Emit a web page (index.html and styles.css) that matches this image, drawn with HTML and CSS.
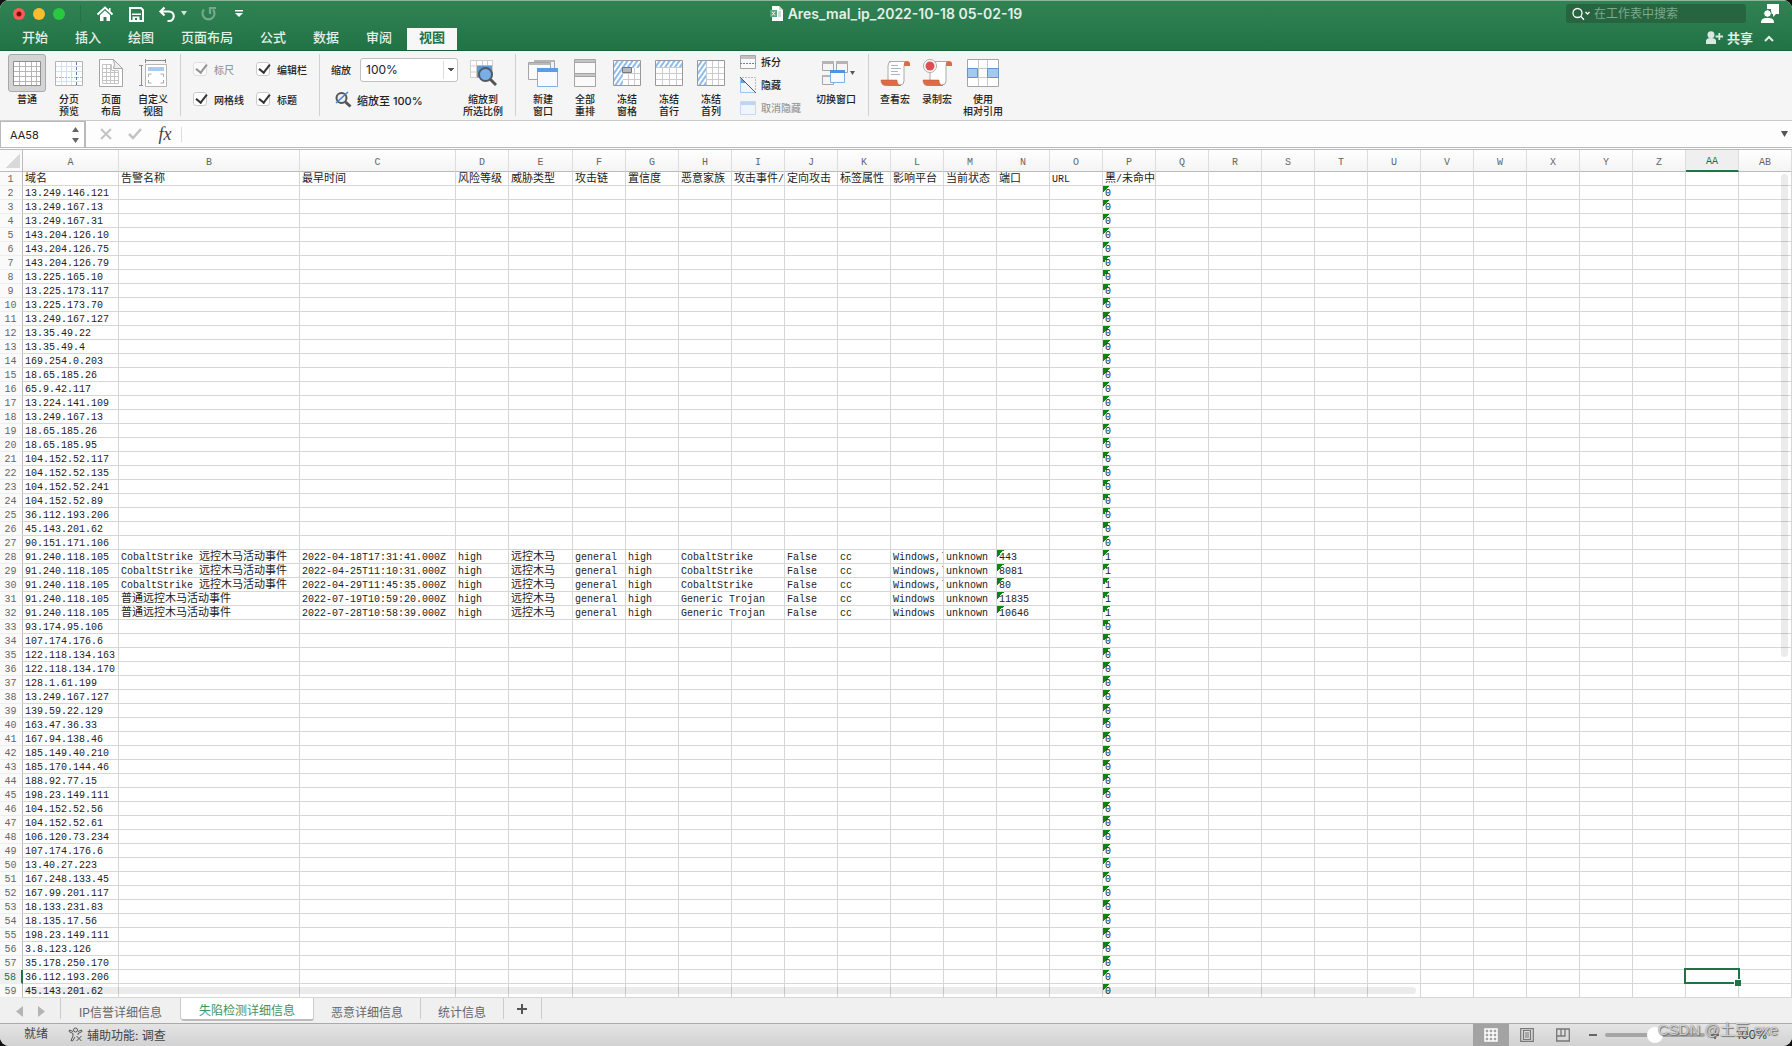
FILE: index.html
```html
<!DOCTYPE html>
<html lang="zh-CN">
<head>
    <meta charset="UTF-8">
    <meta name="viewport" content="width=device-width, initial-scale=1.0">
    <title>Ares_mal_ip_2022-10-18 05-02-19</title>
    <link rel="stylesheet" href="styles.css">
</head>
<body>
<div class="window">
    <!-- Title bar -->
    <header>
        <div class="titlebar">
            <div class="title-left">
                <button class="light red" aria-label="关闭"></button>
                <button class="light yellow" aria-label="最小化"></button>
                <button class="light green" aria-label="缩放"></button>
                <div class="quick">
                    <button aria-label="主页"><svg width="18" height="18" viewBox="0 0 18 18"><path d="M1.5 9.5 9 2.5l7.500 7" fill="none" stroke="#fff" stroke-width="2"/><path d="M4 10v6h3.500v-4h3v4H14v-6L9 5.500z" fill="#fff"/><path d="M13 3h1.500v4H13z" fill="#fff"/></svg></button>
                    <button aria-label="保存"><svg width="18" height="18" viewBox="0 0 18 18"><path d="M3 3h11l2 2v11H3z" fill="none" stroke="#fff" stroke-width="2"/><path d="M5 8.500h9V10H5zM5.500 11.500h7V16H10v-3H8v3H5.500z" fill="#fff"/></svg></button>
                    <button class="undo" aria-label="撤销"><svg width="18" height="18" viewBox="0 0 18 18"><path d="M6.500 2.500 2.500 6.500l4 4M3 6.500h8a4 4 0 0 1 0 9.500H9.500" fill="none" stroke="#fff" stroke-width="2.200"/></svg><svg width="6" height="5" viewBox="0 0 6 5"><path d="M0 0h6L3 4.500z" fill="#d5e5db"/></svg></button>
                    <button class="redo" aria-label="重复"><svg width="18" height="18" viewBox="0 0 18 18"><path d="M4 4.500a6 6 0 1 0 9 0M10 9V3h6" fill="none" stroke="#75a98b" stroke-width="2.200"/></svg></button>
                    <button class="more" aria-label="自定义"><svg width="8" height="8" viewBox="0 0 8 8"><path d="M0 0h8v1.500H0zM0 3h8L4 7z" fill="#fff"/></svg></button>
                </div>
            </div>
            <h1>
                <svg width="13" height="15" viewBox="0 0 13 15"><path d="M2 0h7l4 4v11H2z" fill="#fff"/><path d="M9 0v4h4z" fill="#c9ddd1"/><path d="M0 4h7v7H0z" fill="#58a57b"/><path d="m2 5.500 3 4m0-4-3 4" stroke="#fff" fill="none"/><path d="M8 6h3M8 8h3M8 10h3" stroke="#8fc0a3"/></svg>
                Ares_mal_ip_2022-10-18 05-02-19
            </h1>
            <div class="title-right">
                <label class="search">
                    <svg width="19" height="14" viewBox="0 0 19 14"><circle cx="5.500" cy="6" r="4.500" fill="none" stroke="#fff" stroke-width="1.300"/><path d="m9 9.500 3 3.200M13.500 5l2 2 2-2" fill="none" stroke="#fff" stroke-width="1.300"/></svg>
                    <input type="text" placeholder="在工作表中搜索" aria-label="在工作表中搜索">
                </label>
                <button aria-label="反馈"><svg width="18" height="19" viewBox="0 0 18 19"><path d="M6 0h12v10h-3l-3 3v-3h-2V5H6z" fill="#fff"/><circle cx="6.500" cy="9.500" r="3.800" fill="#fff" stroke="#2b7b4d"/><path d="M0 19c0-4 2-5 6.500-5s6.500 1 6.500 5z" fill="#fff"/></svg></button>
            </div>
        </div>
        <nav>
            <a href="#">开始</a>
            <a href="#">插入</a>
            <a href="#">绘图</a>
            <a href="#">页面布局</a>
            <a href="#">公式</a>
            <a href="#">数据</a>
            <a href="#">审阅</a>
            <a href="#" class="active">视图</a>
            <button class="share"><svg width="17" height="13" viewBox="0 0 17 13"><circle cx="5" cy="3.800" r="3.500" fill="#d9e9df"/><path d="M0 13V10q0-3 5-3t5 3v3z" fill="#d9e9df"/><path d="M9.500 5.500H17M13.300 2v7" stroke="#d9e9df" stroke-width="1.800"/></svg>共享</button>
            <button class="collapse" aria-label="折叠功能区"><svg width="10" height="7" viewBox="0 0 10 7"><path d="M1 6l4-4 4 4" fill="none" stroke="#e3efe7" stroke-width="2"/></svg></button>
        </nav>
    </header>

    <!-- Ribbon -->
    <section class="ribbon">
        <div class="group views">
            <button class="big pressed"><span class="ico"><svg width="28" height="28" viewBox="0 0 28 28"><path d="M.5 2.500h27v24H.5z" fill="#fff" stroke="#8e8e8e"/><path d="M1 7.500h26M1 12.500h26M1 17.500h26M1 22.500h26M6.500 3v23M12.500 3v23M18.500 3v23M23.500 3v23" stroke="#b5b5b5"/></svg></span>普通</button>
            <button class="big"><span class="ico"><svg width="28" height="28" viewBox="0 0 28 28"><path d="M.5 2.500h27v24H.5z" fill="#fff" stroke="#b3b3b3"/><path d="M1 7.500h26M1 12.500h26M1 22.500h26M6.500 3v23M11.500 3v23M16.500 3v23" stroke="#d4e2f0"/><path d="M1 18.500h26" stroke="#9cc0e4" stroke-dasharray="2 1"/><path d="M21.500 3v23" stroke="#5b7da3" stroke-dasharray="3 2"/></svg></span>分页<br>预览</button>
            <button class="big"><span class="ico"><svg width="28" height="28" viewBox="0 0 28 28"><path d="M2.500.5h14l9 9v18h-23z" fill="#fff" stroke="#a5a5a5"/><path d="M16.500.5q2 5 0 9h9z" fill="#eee" stroke="#a5a5a5"/><path d="M5.500 5.500h9v6h7v13h-16zM6 9.500h9M6 13.500h15M6 17.500h15M6 21.500h15M9.500 6v18M13.500 6v18M17.500 12v12" fill="none" stroke="#c4c4c4"/></svg></span>页面<br>布局</button>
            <button class="big"><span class="ico"><svg width="28" height="28" viewBox="0 0 28 28"><path d="M6 1.500h21M6.500 0v4M26.500 0v4M2.500 6v20M0 6.500h4M0 26.500h4" stroke="#8b8b8b"/><path d="M6.500 5.500h21v22h-21z" fill="#fff" stroke="#b5b5b5"/><path d="M9 8h16v4H9z" fill="#a9cbed"/><path d="M9.500 18v-3h3M21.500 15h3v3M9.500 21v3h3M21.500 24h3v-3" fill="none" stroke="#aaa"/></svg></span>自定义<br>视图</button>
        </div>
        <div class="group checks">
            <label class="off"><input type="checkbox" checked disabled>标尺</label>
            <label><input type="checkbox" checked>编辑栏</label>
            <label><input type="checkbox" checked>网格线</label>
            <label><input type="checkbox" checked>标题</label>
        </div>
        <div class="group zoom">
            <div class="zoom-col">
                <label>缩放<select><option>100%</option></select></label>
                <button class="small"><svg width="17" height="17" viewBox="0 0 17 17"><circle cx="6.500" cy="7" r="5" fill="#eee" stroke="#555" stroke-width="2"/><path d="m10.500 11 5 4.500" stroke="#555" stroke-width="3"/><path d="m1 12 12-11" stroke="#3f83cf" stroke-width="1.500"/></svg>缩放至 100%</button>
            </div>
            <button class="big"><span class="ico"><svg width="28" height="28" viewBox="0 0 28 28"><path d="M1.500 1.500h22v17h-22zM1.500 7h22M1.500 13h22M7.500 1v17M13.500 1v17M18.500 1v17" fill="#fff" stroke="#cfcfcf"/><path d="M8 6.500h15v12H8z" fill="#5c9be0"/><circle cx="16.500" cy="15.500" r="6.500" fill="#79aee8" stroke="#505a66" stroke-width="2"/><path d="m21 20 6 6" stroke="#555" stroke-width="3"/></svg></span>缩放到<br>所选比例</button>
        </div>
        <div class="group windows">
            <button class="big"><span class="ico"><svg width="30" height="28" viewBox="0 0 30 28"><path d="M6.500 1.500h20v17h-20z" fill="#f3f3f3" stroke="#a5a5a5"/><path d="M6 1h21v2H6z" fill="#b5b5b5"/><path d="M.5 3.500h22v17H.5z" fill="#fafafa" stroke="#a5a5a5"/><path d="M1 4h21v2H1z" fill="#bbb"/><path d="M9.500 9.500h20v18h-20z" fill="#f7faff" stroke="#7eb0e8"/><path d="M9 9h21v4H9z" fill="#5c9ce6"/></svg></span>新建<br>窗口</button>
            <button class="big"><span class="ico"><svg width="28" height="28" viewBox="0 0 28 28"><path d="M3.500.5h21v27h-21z" fill="#fafafa" stroke="#a5a5a5"/><path d="M4 1h20v2H4zM4 15h20v2H4z" fill="#c5c5c5"/><path d="M4 3.500h20M4 14.500h20M4 17.500h20" stroke="#a5a5a5"/></svg></span>全部<br>重排</button>
            <button class="big"><span class="ico"><svg width="28" height="28" viewBox="0 0 28 28"><defs><pattern id="hatch" width="4" height="4" patternUnits="userSpaceOnUse" patternTransform="rotate(35)"><path d="M0 0h4v4H0z" fill="#fff"/><path d="M0 0h2v4H0z" fill="#8dbcec"/></pattern></defs><path d="M.5 1.500h27v25H.5z" fill="#fff" stroke="#999"/><path d="M1 2h26v7H10v17H1z" fill="url(#hatch)"/><path d="M10 14.500h17M10 20.500h17M15.500 9v17M21.500 9v17" stroke="#ccc"/><path d="M9.500 8.500h9v5h-9z" fill="#b5b8c4" stroke="#777"/></svg></span>冻结<br>窗格</button>
            <button class="big"><span class="ico"><svg width="28" height="28" viewBox="0 0 28 28"><path d="M.5 1.500h27v25H.5z" fill="#fff" stroke="#999"/><path d="M1 2h26v6H1z" fill="url(#hatch)"/><path d="M1 8.500h26M1 14.500h26M1 20.500h26M7.500 9v17M14.500 9v17M21.500 9v17" stroke="#ccc"/></svg></span>冻结<br>首行</button>
            <button class="big"><span class="ico"><svg width="28" height="28" viewBox="0 0 28 28"><path d="M.5 1.500h27v25H.5z" fill="#fff" stroke="#999"/><path d="M1 2h8v24H1z" fill="url(#hatch)"/><path d="M9 8.500h18M9 14.500h18M9 20.500h18M9.500 2v24M15.500 2v24M21.500 2v24" stroke="#ccc"/></svg></span>冻结<br>首列</button>
            <div class="stack">
                <button class="small"><svg width="16" height="14" viewBox="0 0 16 14"><path d="M.5.500h15v13H.5z" fill="#fafafa" stroke="#a5a5a5"/><path d="M1 1h14v3H1z" fill="#c0c0c0"/><path d="M0 8.500h16" stroke="#4b8bd4" stroke-dasharray="2 1"/></svg>拆分</button>
                <button class="small"><svg width="16" height="16" viewBox="0 0 16 16"><path d="M.5 1v14.500H15" fill="#edf4fc" stroke="#9cc5f0"/><path d="M1 1v14h14z" fill="#edf4fc"/><path d="M1 1.500 6 6H1z" fill="#5c9ce6"/><path d="M2 .5h13.500V14" fill="none" stroke="#bbb" stroke-dasharray="2 1"/><path d="m0 0 16 16" stroke="#555"/></svg>隐藏</button>
                <button class="small" disabled><svg width="16" height="14" viewBox="0 0 16 14"><path d="M.5.500h15v13H.5z" fill="#f0f5fb" stroke="#c5daf2"/><path d="M1 1h14v3H1z" fill="#bcd5f2"/></svg>取消隐藏</button>
            </div>
            <button class="big wide"><span class="ico"><svg width="28" height="28" viewBox="0 0 28 28"><path d="M.5 2.500h11v9H.5zM14.500 2.500h11v11h-11zM.5 16.500h11v9H.5z" fill="#f5f5f5" stroke="#a5a5a5"/><path d="M0 2h12v3H0zM14 2h12v3H14zM0 16h12v2H0z" fill="#b5b5b5"/><path d="M8.500 11.500h14v12h-14z" fill="#f7faff" stroke="#7eb0e8"/><path d="M8 11h15v3H8z" fill="#4f93e2"/></svg><svg class="drop" width="5" height="5" viewBox="0 0 5 5"><path d="M0 0h5L2.500 4z" fill="#555"/></svg></span>切换窗口</button>
        </div>
        <div class="group macros">
            <button class="big"><span class="ico"><svg width="30" height="28" viewBox="0 0 30 28"><path d="M9 2.500h17q-2 1-2 5V22q0 4-4 4H8V7q0-4 3-4.500" fill="#fff" stroke="#aaa"/><path d="M24 7V5q0-3 3-3t3 3v2z" fill="#dc6c45"/><path d="M1 21h16q0 5 4 5.500H6q-5 0-5-5.500z" fill="#dc6c45" stroke="#b95532" stroke-width=".5"/><path d="M11 6.500h7M11 9.500h10M11 12.500h7M11 15.500h9" stroke="#a9b5c5"/></svg></span>查看宏</button>
            <button class="big"><span class="ico"><svg width="30" height="28" viewBox="0 0 30 28"><path d="M9 2.500h17q-2 1-2 5V22q0 4-4 4H8V7q0-4 3-4.500" fill="#fff" stroke="#aaa"/><path d="M24 7V5q0-3 3-3t3 3v2z" fill="#dc6c45"/><path d="M1 21h16q0 5 4 5.500H6q-5 0-5-5.500z" fill="#dc6c45" stroke="#b95532" stroke-width=".5"/><circle cx="8" cy="7" r="6.500" fill="#fff" stroke="#aaa"/><circle cx="8" cy="7" r="4.500" fill="#e04f4f"/></svg></span>录制宏</button>
            <button class="big wide"><span class="ico"><svg width="32" height="28" viewBox="0 0 32 28"><path d="M.5.500h31v27H.5z" fill="#fff" stroke="#a5a5a5"/><path d="M1 9.500h30M1 18.500h30M11.500 1v26M20.500 1v26" stroke="#c9c9c9"/><path d="M.5 9.500h10v9H.5zM20.500 9.500h11v9h-11z" fill="#a5c8ee" stroke="#5b97d6"/></svg></span>使用<br>相对引用</button>
        </div>
    </section>

    <!-- Formula bar -->
    <section class="formula">
        <div class="namebox">
            <input type="text" value="AA58" aria-label="名称框">
            <svg width="7" height="16" viewBox="0 0 7 16"><path d="M0 5h7L3.500 0zM0 11h7l-3.500 5z" fill="#666"/></svg>
        </div>
        <button aria-label="取消"><svg width="12" height="12" viewBox="0 0 12 12"><path d="m1 1 10 10M11 1 1 11" stroke="#c3c3c3" stroke-width="2"/></svg></button>
        <button aria-label="输入"><svg width="14" height="12" viewBox="0 0 14 12"><path d="m1 6 4 4 8-9" fill="none" stroke="#c3c3c3" stroke-width="2.500"/></svg></button>
        <button class="fx">fx</button>
        <input class="formula-text" type="text" aria-label="编辑栏">
        <button aria-label="展开"><svg width="7" height="6" viewBox="0 0 7 6"><path d="M0 0h7L3.500 6z" fill="#555"/></svg></button>
    </section>

    <!-- Sheet, filled in by the script below -->
    <main class="sheet">
        <table id="grid"></table>
        <div class="scroll-v"></div>
        <div class="scroll-h"></div>
    </main>

    <footer>
        <div class="tabs">
            <button class="arrow" aria-label="上一个"><svg width="7" height="11" viewBox="0 0 7 11"><path d="M7 0v11L0 5.500z" fill="#b4b4b4"/></svg></button>
            <button class="arrow" aria-label="下一个"><svg width="7" height="11" viewBox="0 0 7 11"><path d="M0 0v11l7-5.500z" fill="#b4b4b4"/></svg></button>
            <a href="#" class="first">IP信誉详细信息</a>
            <a href="#" class="active">失陷检测详细信息</a>
            <a href="#">恶意详细信息</a>
            <a href="#">统计信息</a>
            <button class="add" aria-label="新建工作表"><svg width="10" height="10" viewBox="0 0 10 10"><path d="M0 5h10M5 0v10" stroke="#555" stroke-width="2"/></svg></button>
        </div>
        <div class="status">
            <span class="ready">就绪</span>
            <button class="access"><svg width="15" height="15" viewBox="0 0 15 15"><circle cx="7.500" cy="3" r="2" fill="none" stroke="#555"/><path d="M5 4.500 1.500 3 1 4.500l4 2V9L3 13.500l1.500.500L7 10M10 4.500 13.500 3l.5 1.500-4 2V8M8.500 9l5 5M13.500 9l-5 5" fill="none" stroke="#555"/></svg>辅助功能: 调查</button>
            <div class="view-tools">
                <button class="on" aria-label="普通"><svg width="14" height="14" viewBox="0 0 14 14"><path d="M1 1h12v12H1zM1 5h12M1 9h12M5 1v12M9 1v12" fill="none" stroke="#fff" stroke-width="1.500"/></svg></button>
                <button aria-label="页面布局"><svg width="14" height="14" viewBox="0 0 14 14"><path d="M.7.700h12.600v12.600H.7zM3.500 2.500h7v9h-7zM5 5h4M5 7h4M5 9h4" fill="none" stroke="#777" stroke-width="1.200"/></svg></button>
                <button aria-label="分页预览"><svg width="14" height="14" viewBox="0 0 14 14"><path d="M.7 1h12.600v12H.7zM.7 8h8.300V1M5 1v7" fill="none" stroke="#777" stroke-width="1.300"/></svg></button>
                <button class="minus" aria-label="缩小"><svg width="8" height="8" viewBox="0 0 8 8"><path d="M0 4h8" stroke="#666" stroke-width="2"/></svg></button>
                <input type="range" min="0" max="100" value="50" aria-label="显示比例">
                <button class="plus" aria-label="放大"><svg width="8" height="8" viewBox="0 0 8 8"><path d="M0 4h8M4 0v8" stroke="#666" stroke-width="2"/></svg></button>
                <span class="percent">100%</span>
            </div>
        </div>
    </footer>
    <div class="watermark">CSDN @土豆.exe</div>
</div>

<script>
    const widths = [23, 96, 181, 156, 53, 64];
    const headers = ['域名', '告警名称', '最早时间', '风险等级', '威胁类型', '攻击链', '置信度', '恶意家族', '攻击事件/', '定向攻击', '标签属性', '影响平台', '当前状态', '端口', 'URL', '黑/未命中'];
    const ips = ['13.249.146.121', '13.249.167.13', '13.249.167.31', '143.204.126.10', '143.204.126.75', '143.204.126.79',
        '13.225.165.10', '13.225.173.117', '13.225.173.70', '13.249.167.127', '13.35.49.22', '13.35.49.4', '169.254.0.203',
        '18.65.185.26', '65.9.42.117', '13.224.141.109', '13.249.167.13', '18.65.185.26', '18.65.185.95', '104.152.52.117',
        '104.152.52.135', '104.152.52.241', '104.152.52.89', '36.112.193.206', '45.143.201.62', '90.151.171.106',
        '91.240.118.105', '91.240.118.105', '91.240.118.105', '91.240.118.105', '91.240.118.105', '93.174.95.106',
        '107.174.176.6', '122.118.134.163', '122.118.134.170', '128.1.61.199', '13.249.167.127', '139.59.22.129',
        '163.47.36.33', '167.94.138.46', '185.149.40.210', '185.170.144.46', '188.92.77.15', '198.23.149.111',
        '104.152.52.56', '104.152.52.61', '106.120.73.234', '107.174.176.6', '13.40.27.223', '167.248.133.45',
        '167.99.201.117', '18.133.231.83', '18.135.17.56', '198.23.149.111', '3.8.123.126', '35.178.250.170',
        '36.112.193.206', '45.143.201.62'];
    // row number -> event, time, family, platform, port
    const events = {
        28: ['CobaltStrike 远控木马活动事件', '2022-04-18T17:31:41.000Z', 'CobaltStrike', 'Windows,l', '443'],
        29: ['CobaltStrike 远控木马活动事件', '2022-04-25T11:10:31.000Z', 'CobaltStrike', 'Windows,l', '8081'],
        30: ['CobaltStrike 远控木马活动事件', '2022-04-29T11:45:35.000Z', 'CobaltStrike', 'Windows,l', '80'],
        31: ['普通远控木马活动事件', '2022-07-19T10:59:20.000Z', 'Generic Trojan', 'Windows', '11835'],
        32: ['普通远控木马活动事件', '2022-07-28T10:58:39.000Z', 'Generic Trojan', 'Windows', '10646']
    };

    function colName(i) {
        return i < 26 ? String.fromCharCode(65 + i) : 'A' + String.fromCharCode(39 + i);
    }

    function format(text) {
        return text.replace(/[\u4e00-\u9fff]+/g, '<span class="cjk">$&</span>');
    }

    let html = '<colgroup>';
    for (let i = 0; i <= 28; i++) {
        html += '<col style="width:' + (widths[i] || 53) + 'px">';
    }
    html += '</colgroup><thead><tr><th class="corner"></th>';
    for (let i = 0; i < 28; i++) {
        html += '<th' + (i === 26 ? ' class="current"' : '') + '>' + colName(i) + '</th>';
    }
    html += '</tr></thead><tbody>';

    for (let row = 1; row <= 59; row++) {
        let cells = new Array(28).fill('');
        const ev = events[row];
        if (row === 1) {
            headers.forEach((h, i) => cells[i] = h);
        } else {
            cells[0] = ips[row - 2];
            cells[15] = ev ? '1' : '0';
        }
        if (ev) {
            [ev[0], ev[1], 'high', '远控木马', 'general', 'high', ev[2], '', 'False', 'cc', ev[3], 'unknown', ev[4]]
                .forEach((v, i) => cells[i + 1] = v);
        }
        html += '<tr><th' + (row === 58 ? ' class="current"' : '') + '>' + row + '</th>';
        for (let i = 0; i < 28; i++) {
            // the family name runs over the empty cell beside it
            if (ev && i === 8) continue;
            let cls = '';
            if (row > 1 && (i === 15 || (ev && i === 13))) cls = ' class="flag"';
            if (row === 58 && i === 26) cls = ' class="selected"';
            html += '<td' + cls + (ev && i === 7 ? ' colspan="2"' : '') + '>' + format(cells[i]) + '</td>';
        }
        html += '</tr>';
    }
    document.getElementById('grid').innerHTML = html + '</tbody>';
</script>
</body>
</html>
```
FILE: styles.css
```css
* {
    box-sizing: border-box;
}

body {
    margin: 0;
    background-color: #111;
    font-family: Inter, "Noto Sans CJK SC", sans-serif;
    font-size: 12px;
    color: #222;
}

button, input, select {
    font-family: inherit;
    font-size: inherit;
    color: inherit;
}

button {
    display: flex;
    align-items: center;
    justify-content: center;
    padding: 0;
    border: none;
    background: none;
}

svg {
    flex: none;
}

a {
    color: inherit;
    text-decoration: none;
}

.window {
    position: relative;
    display: flex;
    flex-direction: column;
    height: 100vh;
    overflow: hidden;
    border-radius: 9px;
    background-color: #fff;
}

/* Title bar */
header {
    flex: none;
    background: linear-gradient(#318253, #217346);
    border-top: 1px solid #8cb59c;
    border-bottom: 1px solid #1a6339;
    color: #e3efe7;
}

.titlebar {
    display: grid;
    grid-template-columns: 1fr auto 1fr;
    align-items: center;
    height: 25px;
}

.title-left, .quick, .title-right, nav {
    display: flex;
    align-items: center;
}

.title-left {
    gap: 8px;
    padding-left: 13px;
}

.light {
    width: 12px;
    height: 12px;
    border-radius: 50%;
}

.red {
    background: radial-gradient(circle, #7d0d08 2px, #fc5b57 3px);
}

.yellow {
    background-color: #fdbc2e;
}

.green {
    background-color: #28c83f;
}

.quick {
    gap: 13px;
    margin-left: 7px;
    padding-left: 15px;
    border-left: 1px solid #286f47;
}

.undo {
    gap: 5px;
}

.more {
    margin-left: 4px;
}

h1 {
    display: flex;
    align-items: center;
    gap: 5px;
    margin: 0;
    font-size: 14px;
    font-weight: 600;
    line-height: 20px;
}

.title-right {
    justify-content: flex-end;
    gap: 15px;
    padding-right: 13px;
}

.search {
    display: flex;
    align-items: center;
    gap: 2px;
    width: 180px;
    height: 19px;
    padding-left: 6px;
    border-radius: 3px;
    background-color: #266540;
}

.search input {
    width: 100%;
    padding: 0 1px;
    border: none;
    outline: none;
    background: none;
    color: #fff;
}

.search input::placeholder {
    color: #7fa98f;
}

nav {
    gap: 3px;
    height: 24px;
    padding: 0 18px 0 10px;
    font-size: 13px;
    font-weight: 500;
}

nav a {
    height: 22px;
    padding: 0 12px;
    line-height: 20px;
}

nav a.active {
    align-self: flex-end;
    background-color: #f7f7f7;
    color: #217346;
    font-weight: 700;
    line-height: 18px;
}

.share {
    gap: 4px;
    margin-left: auto;
    padding-bottom: 2px;
    font-weight: 700;
}

.collapse {
    margin-left: 8px;
}

/* Ribbon */
.ribbon {
    flex: none;
    display: flex;
    height: 70px;
    padding: 3px 0 4px;
    background-color: #f5f5f5;
    border-bottom: 1px solid #c9c9c9;
    font-size: 10px;
    font-weight: 500;
}

.group {
    display: flex;
    align-items: flex-start;
    height: 62px;
    border-right: 1px solid #d0d0d0;
}

.views {
    padding: 0 6px;
}

.big {
    flex-direction: column;
    justify-content: flex-start;
    gap: 1px;
    width: 42px;
    font-weight: 500;
    line-height: 12px;
    white-space: nowrap;
}

.ico {
    position: relative;
    display: flex;
    align-items: center;
    justify-content: center;
    width: 38px;
    height: 38px;
}

.pressed .ico {
    border: 1px solid #a9a9a9;
    border-radius: 3px;
    background-color: #d4d4d4;
}

.wide {
    width: 50px;
}

.drop {
    position: absolute;
    right: 0;
    top: 17px;
}

.checks {
    display: grid;
    grid-template-columns: 63px 51px;
    grid-auto-rows: 30px;
    padding: 0 12px;
}

.checks label {
    display: flex;
    align-items: center;
    gap: 7px;
    height: 30px;
    white-space: nowrap;
}

.checks input {
    flex: none;
    appearance: none;
    width: 14px;
    height: 14px;
    margin: 0;
    border: 1px solid #ccc;
    border-radius: 3px;
    background-color: #fff;
}

/* tick mark */
.checks input::after {
    content: "";
    display: block;
    width: 5px;
    height: 9px;
    margin: -1px 0 0 4px;
    border: solid #333;
    border-width: 0 2px 2px 0;
    transform: rotate(38deg);
}

.checks .off {
    color: #999;
}

.checks .off input {
    opacity: 0.5;
}

.zoom {
    gap: 2px;
    padding: 0 9px 0 11px;
}

.zoom-col {
    width: 127px;
}

.zoom-col label {
    display: flex;
    align-items: center;
    justify-content: space-between;
    height: 31px;
}

.zoom-col select {
    appearance: none;
    width: 98px;
    height: 24px;
    padding: 0 5px;
    border: 1px solid #c0c0c0;
    border-radius: 3px;
    background: linear-gradient(#ddd, #ddd) 82px 50% / 1px 18px no-repeat,
        linear-gradient(to bottom left, #555 50%, transparent 0) 87px 50% / 3px 4px no-repeat,
        linear-gradient(to bottom right, #555 50%, transparent 0) 90px 50% / 3px 4px no-repeat, #fff;
    font-size: 12px;
}

.zoom .big {
    width: 46px;
}

.small {
    justify-content: flex-start;
    gap: 5px;
    height: 23px;
    font-weight: 500;
    white-space: nowrap;
}

.zoom .small {
    height: 29px;
    padding-left: 4px;
    font-size: 11px;
}

.small:disabled {
    color: #999;
}

.windows {
    padding: 0 7px 0 6px;
}

.stack {
    margin: -4px 10px 0 8px;
}

.macros {
    padding-left: 5px;
    border-right: none;
}

/* Formula bar */
.formula {
    flex: none;
    display: flex;
    align-items: center;
    height: 29px;
    border-bottom: 3px double #bbb;
    background-color: #fdfdfd;
}

.formula button {
    width: 29px;
}

.namebox {
    display: flex;
    align-items: center;
    width: 86px;
    height: 26px;
    margin-right: 5px;
    padding: 0 5px 0 9px;
    border: 1px solid #b9b9b9;
    border-width: 1px 2px 0 1px;
    background-color: #fff;
}

.namebox input {
    width: 100%;
    padding: 0;
    border: none;
    outline: none;
    background: none;
    font-size: 11px;
}

.formula .fx {
    width: 32px;
    font-family: "Liberation Serif", serif;
    font-size: 18px;
    font-style: italic;
    color: #444;
}

.formula-text {
    flex: 1;
    height: 15px;
    border: none;
    border-left: 1px solid #ddd;
    outline: none;
    background: none;
}

.formula button:last-child {
    width: 16px;
}

/* Sheet */
.sheet {
    position: relative;
    flex: 1;
    min-height: 0;
    overflow: hidden;
    font-family: "Liberation Mono", "Noto Sans CJK SC", monospace;
    font-size: 10px;
}

table {
    width: 100%;
    table-layout: fixed;
    border-collapse: separate;
    border-spacing: 0;
}

th, td {
    height: 14px;
    padding: 2px 0 0;
    border-right: 1px solid #d6d6d6;
    border-bottom: 1px solid #d6d6d6;
    line-height: 11px;
    white-space: nowrap;
}

td {
    overflow: hidden;
    padding-left: 2px;
}

th {
    background-color: #fafafa;
    color: #666;
    font-weight: normal;
    text-align: center;
}

thead th {
    height: 22px;
    padding-top: 3px;
    border-right-color: #ddd;
    border-bottom-color: #bbb;
    background: linear-gradient(#fff, #f4f4f4);
}

tbody th, .corner {
    border-right-color: #bbb;
}

tbody th {
    padding-right: 1px;
    border-bottom-color: #eee;
}

thead .corner {
    background: linear-gradient(to bottom right, transparent 50%, #d9d9d9 0) 5px 4px / 15px 14px no-repeat, #fafafa;
}

thead .current {
    border-bottom: 2px solid #217346;
    background: #efefef;
    color: #217346;
}

tbody .current {
    border-right: 2px solid #217346;
    background-color: #efefef;
    color: #217346;
}

.cjk {
    font-size: 11px;
    line-height: 11px;
}

/* green corner on numbers stored as text */
.flag {
    background: linear-gradient(to bottom right, #0b850b 50%, transparent 0) 0 0 / 7px 7px no-repeat;
}

.selected {
    position: relative;
    overflow: visible;
}

.selected::before {
    content: "";
    position: absolute;
    inset: -2px -2px -1px -2px;
    border: 2px solid #217346;
}

.selected::after {
    content: "";
    position: absolute;
    right: -3px;
    bottom: -3px;
    width: 6px;
    height: 6px;
    border: 1px solid #fff;
    border-width: 1px 0 0 1px;
    background-color: #217346;
}

.scroll-v, .scroll-h {
    position: absolute;
    border-radius: 4px;
    background-color: rgba(0, 0, 0, 0.08);
}

.scroll-v {
    top: 24px;
    right: 4px;
    width: 7px;
    height: 57%;
}

.scroll-h {
    left: 24px;
    right: 21%;
    bottom: 4px;
    height: 7px;
}

/* Sheet tabs */
.tabs {
    display: flex;
    height: 25px;
    padding-left: 8px;
    background-color: #f0f0f0;
    color: #666;
}

.arrow {
    width: 22px;
    height: 26px;
    padding-top: 1px;
}

.tabs a {
    height: 21px;
    padding: 4px 17px 0;
    border-right: 1px solid #ccc;
    line-height: 22px;
    white-space: nowrap;
}

.tabs .first {
    margin-left: 8px;
    padding: 4px 18px 0;
    border-left: 1px solid #ccc;
}

.tabs .active {
    height: 23px;
    padding: 2px 18px 0;
    border-bottom: 2px solid #bbb;
    border-radius: 0 0 3px 3px;
    background-color: #fff;
    color: #3f9463;
}

.add {
    width: 38px;
    height: 21px;
    border-right: 1px solid #ccc;
}

/* Status bar */
.status {
    display: flex;
    align-items: center;
    height: 23px;
    padding: 0 24px;
    border-top: 1px solid #aaa;
    background: linear-gradient(#e4e4e4, #d2d2d2);
    color: #444;
    line-height: 20px;
}

.ready, .access {
    padding-bottom: 2px;
}

.access {
    gap: 4px;
    margin-left: 20px;
}

.view-tools {
    display: flex;
    align-items: center;
    height: 100%;
    margin-left: auto;
}

.view-tools button {
    width: 36px;
    height: 22px;
}

.view-tools .on {
    background-color: #a3a3a3;
}

.view-tools .minus {
    width: 24px;
}

.view-tools .plus {
    width: 20px;
}

.view-tools .percent {
    width: 32px;
    margin-left: 11px;
}

input[type="range"] {
    appearance: none;
    width: 100px;
    height: 16px;
    margin: 0;
    background: none;
}

input[type="range"]::-webkit-slider-runnable-track {
    height: 4px;
    border-radius: 2px;
    background-color: #a5a5a5;
}

input[type="range"]::-webkit-slider-thumb {
    appearance: none;
    width: 16px;
    height: 16px;
    margin-top: -6px;
    border-radius: 50%;
    background-color: #fff;
}

.watermark {
    position: absolute;
    right: 14px;
    bottom: 4px;
    font-family: "Liberation Sans", "Noto Sans CJK SC", sans-serif;
    font-size: 15px;
    line-height: 24px;
    color: rgba(255, 255, 255, 0.7);
    text-shadow: 0 0 1px #555, 1px 1px 1px #777;
}
```
